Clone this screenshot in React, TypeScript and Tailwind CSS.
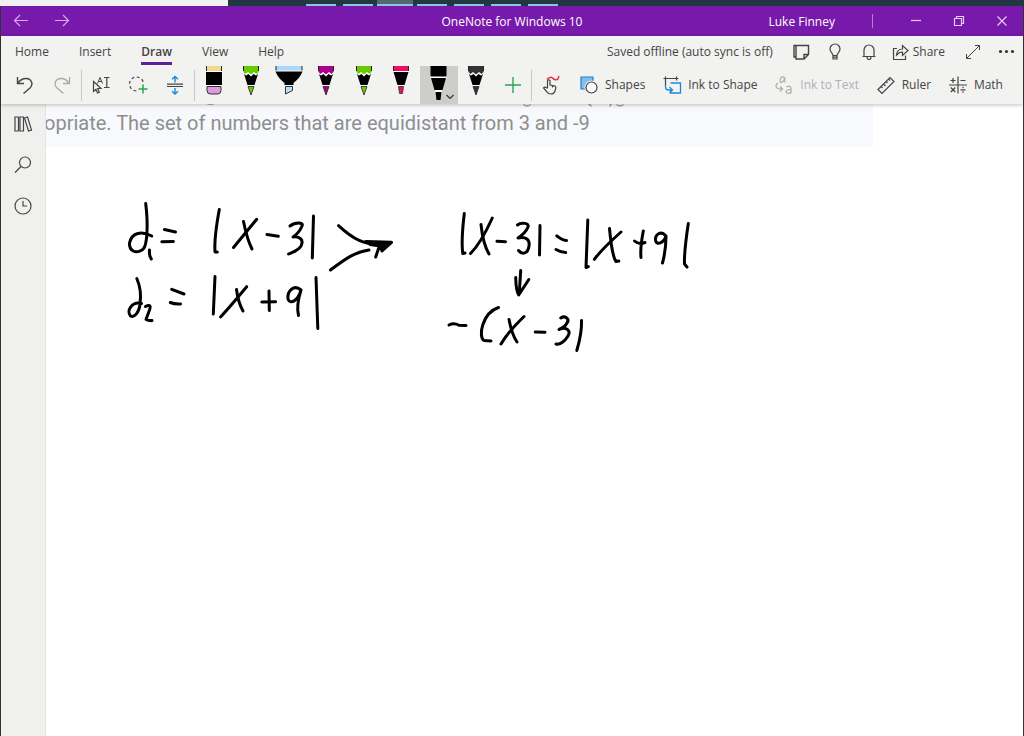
import type { ReactNode } from 'react'

interface IconProps {
    children: ReactNode;
    size?: number;
    stroke?: string;
}

function Icon({ children, size = 20, stroke = '#444444' }: IconProps) {
    return (
        <svg width={size} height={size} viewBox="0 0 20 20" fill="none" stroke={stroke} strokeWidth="1.2" className="shrink-0" aria-hidden="true">
            {children}
        </svg>
    )
}

interface ToolProps {
    label: string;
    children: ReactNode;
}

function Tool({ label, children }: ToolProps) {
    return (
        <button type="button" aria-label={label} className="flex h-[38px] items-center justify-center">
            {children}
        </button>
    )
}

function LabelTool({ label, children, disabled }: ToolProps & { disabled?: boolean }) {
    return (
        <button type="button" disabled={disabled} className="flex h-[38px] items-center gap-[6px] whitespace-nowrap disabled:text-[#b1b1b1]">
            {children}
            <span>{label}</span>
        </button>
    )
}

function Separator() {
    return <div className="h-[31px] w-px shrink-0 bg-[#c8c8c8]"></div>
}

function Pencil({ color }: { color: string }) {
    return (
        <svg width="30" height="38" viewBox="0 0 30 38" aria-hidden="true">
            <path d="M7.5 5h15l-4.500 16h-6z" fill="#fff" />
            <path d="M7.5 0h15v6l-2 2-2.5-2-3 2.5-3-2.5-2.5 2-2-2z" fill={color} />
            <path d="M7.5 0v5M22.500 0v5" stroke="#222" />
            <path d="M8 8l2 1.500 2.500-1.500 2.500 2.500 2.500-2.500 2.500 1.500 2-1.500-3.500 11h-7z" fill="#000" />
            <path d="M12 20.500h6l-3 8.500z" fill={color} stroke="#222" strokeWidth=".8" />
        </svg>
    )
}

function Eraser() {
    return (
        <svg width="30" height="38" viewBox="0 0 30 38" aria-hidden="true">
            <path d="M7 0h16v21H7z" fill="#fff" />
            <path d="M7 0h16v5H7z" fill="#f5d98b" />
            <path d="M7.500 0v5M22.500 0v5" stroke="#222" />
            <path d="M7 6h16v13H7z" fill="#000" />
            <path d="M8 20.500h14v4q0 3.500-3.500 3.500h-7Q8 28 8 24.500z" fill="#dc9bdc" stroke="#333" />
        </svg>
    )
}

function Highlighter() {
    return (
        <svg width="30" height="38" viewBox="0 0 30 38" aria-hidden="true">
            <path d="M2 4h26v2H2zM11 18h8v3h-8z" fill="#fff" />
            <path d="M2 0h26v4.500H2z" fill="#a9d8fa" />
            <path d="M2 0v4.500M28 0v4.500" stroke="#222" />
            <path d="M1.500 5.500h27Q26 12 19.500 17v2h-9v-2Q4 12 1.500 5.500z" fill="#000" />
            <path d="M11.500 20.500h7v4l-7 3.500z" fill="#b8defa" stroke="#333" />
        </svg>
    )
}

function Marker() {
    return (
        <svg width="30" height="38" viewBox="0 0 30 38" aria-hidden="true">
            <path d="M7.500 4h15v3h-15zM12 18h6v3h-6z" fill="#fff" />
            <path d="M7 0h16v5H7z" fill="#f20d62" />
            <path d="M7.500 0v5M22.500 0v5" stroke="#222" />
            <path d="M7.500 6h15l-4 13h-7z" fill="#000" />
            <path d="M12.500 20.500h5l-1 7h-3z" fill="#f20d62" stroke="#333" strokeWidth=".8" />
        </svg>
    )
}

function BlackPen() {
    return (
        <svg width="37" height="38" viewBox="0 0 37 38" aria-hidden="true">
            <path d="M10.500 9h16v4h-16zM15 23h7v4h-7z" fill="#fff" />
            <path d="M10.500 0h16v10.500h-16zM11 12h15l-3.500 12h-8zM15.500 26h6l-1 8h-4z" fill="#000" />
            <path d="M26.500 29l3.500 3.500 3.500-3.500" fill="none" stroke="#333" strokeWidth="1.200" />
        </svg>
    )
}

const ink = [
    // d1 = |x - 3|
    'M151.700 236C142 231 132 232 129.500 243C129 251 136 254 142 250C148 247 148 222 145.700 203.500',
    'M149.500 250Q149 256 151.300 259', 'M164.500 229.500L175.500 232', 'M161.800 241.700L173.300 241.500',
    'M219.300 209.500Q214 238 215 252L217.300 252', 'M243.500 221.500Q247 239 252 249', 'M256.700 219.300L233.500 247.500',
    'M267 234.500L278.300 236.300', 'M290 226C295 222 304 222 302 226C300 231 296 235 293 237C300 236 304 240 301 246C298 251 293 252 288.500 254', 'M313.500 216L312.300 258',
    // d2 = |x + 9|
    'M136.800 278.500C141 288 141 297 140 304C139 313 134 318 130.500 316C126 311 132 301 141.500 303.500',
    'M145.500 306.500C150 304 151 306 149.500 310L146 319.500Q149 321 152 320.500', 'M171.700 289.300L184 294', 'M170.300 302.500Q175 304.500 180.500 304',
    'M215 276.500L213.300 314', 'M236.500 289.500Q238 302 243 311', 'M246.700 286.700Q228 309 220.500 317', 'M261.800 302L275.500 301.700', 'M269 291L269.300 310.500',
    'M301 290C294 284 287 291 288 299C290 305 298 301 301 290Q296 306 298.500 315.500', 'M316 277.500L317.800 328.500',
    // arrow joining both lines
    'M338.500 225.700C355 241 363 243 381 246L391.500 242.200L366 241.500', 'M330.500 270C344 260 354 252 369 250', 'M375.700 257L380 244L382 251L391 243L370 244.500L384 246.500',
    // |x - 3| = |x + 9|
    'M464.300 213.500Q461 241 462.800 253.500L465 253', 'M481 224.500Q483 244 489 254', 'M492.300 218Q481 243 470.500 253.500', 'M497 241.300L505.500 241.700',
    'M517.500 225C521 222 530 223 528 227C526 232 521 236 518 238C526 236 530 240 529 246C528 254 522 255 518.500 250.500', 'M540 225.500L539.500 255',
    'M556.800 235.800Q562 240 566.500 240.500', 'M556 249.500Q561 252.500 565.700 252.500', 'M587.800 220L586 267.500L588.300 266.500',
    'M609.500 228.500Q612 256 616 261.500L618.800 261', 'M621 232Q602 249 594.300 259.300', 'M634.500 241Q639 245 645 242.500', 'M643.300 231Q640 248 641 257.500',
    'M665 235C661 231 655 234 655.500 240C656 246 664 243 666 236Q666 250 662.500 263', 'M688.300 223.500Q684 252 684.500 264L687 267',
    // step below the left side
    'M520.700 270.500L519.300 293', 'M515.700 277.500Q516 291 518.700 295L528.800 279.500',
    'M449 325Q454 322.500 459 325.300L466 325.500', 'M498.500 307.500C482 313 478 337 484 340.500L491 341', 'M509 319.500Q512 335 517 342', 'M524 316.500Q508 332 501 344',
    'M535.300 332L545 332.300', 'M560.700 318C565 315 570 319 567 323Q565 327 559 329.500C567 326 571 331 568 336C565 341 560 345 556 344', 'M581.500 320.500Q582 333 576.800 350.500',
]

function TitleBar() {
    return (
        <header className="grid h-[30px] grid-cols-3 items-center bg-[#7719aa] text-white">
            <div className="flex items-center gap-[21px] pl-[10px]">
                <button type="button" aria-label="Back">
                    <Icon stroke="#d9a9ee"><path d="M17 9.500H3.500M9 4L3.500 9.500 9 15" /></Icon>
                </button>
                <button type="button" aria-label="Forward">
                    <Icon stroke="#d9a9ee"><path d="M3 9.500h13.500M11 4l5.500 5.500L11 15" /></Icon>
                </button>
            </div>
            <h1 className="pt-[2px] text-center">OneNote for Windows 10</h1>
            <div className="flex items-center justify-end">
                <button type="button" className="pt-[2px]">Luke Finney</button>
                <div className="ml-[37px] h-[14px] w-px bg-[#b67fd3]"></div>
                <div className="ml-[22px] grid w-[128px] grid-cols-3 justify-items-center">
                    <button type="button" aria-label="Minimize">
                        <Icon stroke="#eac8f8"><path d="M5 9.500h10" /></Icon>
                    </button>
                    <button type="button" aria-label="Restore">
                        <Icon stroke="#eac8f8"><path d="M5.500 7.500h7v7h-7zM7.500 7.500v-2h7v7h-2" /></Icon>
                    </button>
                    <button type="button" aria-label="Close">
                        <Icon stroke="#eac8f8"><path d="M5.500 5.500l9 9M14.500 5.500l-9 9" /></Icon>
                    </button>
                </div>
            </div>
        </header>
    )
}

function MenuBar() {
    return (
        <div className="flex h-[30px] items-center justify-between pl-[14px] pr-[7px] pt-[2px]">
            <nav className="flex gap-[30px]">
                <button type="button">Home</button>
                <button type="button">Insert</button>
                <button type="button" className="relative font-semibold">
                    Draw
                    <span className="absolute -bottom-[4px] left-0 h-[3px] w-full bg-[#5c1f9e]"></span>
                </button>
                <button type="button">View</button>
                <button type="button">Help</button>
            </nav>
            <div className="flex items-center">
                <span>Saved offline (auto sync is off)</span>
                <button type="button" aria-label="Feed" className="ml-[18px]">
                    <Icon><path d="M5 15H3V3.500h12M5 3.500h12.500v9L13 17H5zM13 17v-4.500h4.500" strokeWidth="1.400" /></Icon>
                </button>
                <button type="button" aria-label="Tell me" className="ml-[14px]">
                    <Icon><path d="M8 13.500c0-2.500-3-3-3-6.500a5 5 0 0110 0c0 3.500-3 4-3 6.500zM8 13.500v3.500h4v-3.500M8 15.200h4" /></Icon>
                </button>
                <button type="button" aria-label="Notifications" className="ml-[14px]">
                    <Icon><path d="M3.500 14.500h13M5 14.500V8a5 5 0 0110 0v6.500M8 15q0 2.500 2 2.500t2-2.500" /></Icon>
                </button>
                <button type="button" className="ml-[12px] flex items-center gap-[2px]">
                    <Icon><path d="M6 6.500H2.500v11h12v-4M5.500 13q.5-6 6-6V3.500L17 8.500l-5.500 5v-3.500q-3.500 0-6 3z" /></Icon>
                    Share
                </button>
                <button type="button" aria-label="Full screen" className="ml-[18px]">
                    <Icon><path d="M3.500 16.500l13-13M12 3.500h4.500V8M3.500 12v4.500H8" strokeWidth="1" /></Icon>
                </button>
                <button type="button" aria-label="More" className="ml-[13px]">
                    <svg width="20" height="20" viewBox="0 0 20 20" fill="#333" aria-hidden="true">
                        <circle cx="4.500" cy="9.500" r="1.600" /><circle cx="10.500" cy="9.500" r="1.600" /><circle cx="16.500" cy="9.500" r="1.600" />
                    </svg>
                </button>
            </div>
        </div>
    )
}

function DrawTools() {
    return (
        <div className="flex h-[38px] items-center pl-[5px]">
            <div className="grid w-[75px] shrink-0 grid-cols-2">
                <Tool label="Undo">
                    <Icon><path d="M2.500 2v6.500H9M2.500 8.500Q6 3.500 11 3.500t6 5Q17 11 15 13l-6.500 5.500" strokeWidth="1.400" /></Icon>
                </Tool>
                <Tool label="Redo">
                    <Icon stroke="#aaaaaa"><path d="M17.500 2v6.500H11M17.500 8.500Q14 3.500 9 3.500t-6 5Q3 11 5 13l6.500 5.500" strokeWidth="1.300" /></Icon>
                </Tool>
            </div>
            <Separator />
            <div className="grid w-[112px] shrink-0 grid-cols-3">
                <Tool label="Select objects or type text">
                    <Icon>
                        <path d="M2.500 6.500v10l2.500-2.300 1.500 3.800 1.800-.8-1.500-3.700H10z" />
                        <path d="M6.500 8.500L9 2.500l2.500 6M7.500 6.500h3" strokeWidth="1" />
                        <path d="M13 2.500h5.500M13 12.500h5.500M15.800 2.500v10" />
                    </Icon>
                </Tool>
                <Tool label="Lasso select">
                    <Icon>
                        <circle cx="8.500" cy="9" r="7" strokeDasharray="3 2.500" />
                        <circle cx="15" cy="14" r="5" fill="#f2f2f1" stroke="none" />
                        <path d="M15 9.500v9M10.500 14h9" stroke="#31a252" strokeWidth="1.500" />
                    </Icon>
                </Tool>
                <Tool label="Insert or remove space">
                    <Icon>
                        <path d="M2 9.200h16M2 11.500h16" />
                        <path d="M10 7.500V1.500M7 4.200l3-2.700 3 2.700M10 13v6M7 16.300l3 2.700 3-2.700" stroke="#1e8bcd" strokeWidth="1.400" />
                    </Icon>
                </Tool>
            </div>
            <Separator />
            <div className="grid w-[300px] shrink-0 grid-cols-8">
                <Tool label="Eraser"><Eraser /></Tool>
                <Tool label="Green pencil"><Pencil color="#66cc00" /></Tool>
                <Tool label="Highlighter"><Highlighter /></Tool>
                <Tool label="Purple pencil"><Pencil color="#ab008b" /></Tool>
                <Tool label="Light green pencil"><Pencil color="#66cc00" /></Tool>
                <Tool label="Red pen"><Marker /></Tool>
                <button type="button" aria-label="Black pen" aria-pressed="true" className="h-[38px] bg-[#cdcdca]"><BlackPen /></button>
                <Tool label="Black pencil"><Pencil color="#333333" /></Tool>
            </div>
            <div className="grid w-[36px] shrink-0">
                <Tool label="Add pen">
                    <Icon stroke="#31a252"><path d="M10 2v16M2 10h16" strokeWidth="1.400" /></Icon>
                </Tool>
            </div>
            <Separator />
            <div className="grid w-[37px] shrink-0">
                <Tool label="Draw with touch">
                    <Icon>
                        <path d="M6.500 13V5.500q1.300-1.500 2.500 0V10l5 1q1 .5.800 2l-.8 3q-1 3-4 3-2.500 0-4-2L2.500 13q1-2 4 .5M11.500 10.500v2" />
                        <path d="M6 4.500q3-3.500 5.500-1.500 2 2.500 4.500 1.500 2-1 1.500-3.500" stroke="#e0303e" strokeWidth="1.500" />
                    </Icon>
                </Tool>
            </div>
            <div className="flex flex-1 justify-between pl-[10px] pr-[20px]">
                <LabelTool label="Shapes">
                    <Icon><path d="M2 2h12v12H2z" fill="#84c0ec" stroke="#1e7fc8" /><circle cx="12.500" cy="12.500" r="7" fill="#f2f2f1" stroke="none" /><circle cx="12.500" cy="12.500" r="5.500" fill="#fafafa" /></Icon>
                </LabelTool>
                <LabelTool label="Ink to Shape">
                    <Icon>
                        <path d="M2 3.500h14M3.500 1.500v9M14.500 1.500v4M1.500 3.500h4M12.500 3.500h4" />
                        <path d="M8.500 8h10v10h-10v-3M3.500 10v2q0 3 3 3h3.500M7.500 12l3 3-3 3" stroke="#1e8bcd" strokeWidth="1.300" />
                    </Icon>
                </LabelTool>
                <LabelTool label="Ink to Text" disabled>
                    <Icon stroke="#aaaaaa">
                        <path d="M10.500 2.500q-4-2-4.500 3 0 3.500 3.500.5L11 2.500q-1 4 .5 5" />
                        <path d="M4 8q-3 2-1.500 4.500 1 1.500 5 1.500M6 11.500L8.500 14 6 16.500" />
                        <path d="M12.500 12q4-2 4.500 1v5.500M17 14.500q-5 0-5 2.500 1.500 3 5 0" />
                    </Icon>
                </LabelTool>
                <LabelTool label="Ruler">
                    <Icon><path d="M2 14.500L14 2.500l4 4L6 18.500zM5 11.500l1.500 1.500M7.500 9l2 2M10 6.500L11.500 8M12.500 4l1.500 1.500" /></Icon>
                </LabelTool>
                <LabelTool label="Math">
                    <Icon><path d="M10 1.500v17M1 10h18M2.500 5.500h5M5 3v5M12.500 5.500h5M2.800 12.500l4.500 4.500M7.300 12.500L2.800 17M12.500 14.800h5M15 11.800v1.500M15 16.300v1.500" /></Icon>
                </LabelTool>
            </div>
        </div>
    )
}

function SideRail() {
    return (
        <aside className="flex w-[45px] shrink-0 flex-col items-center gap-[21px] border-r border-[#e4e4e3] bg-[#f0f0ee] pt-[10px]">
            <button type="button" aria-label="Notebooks">
                <Icon><path d="M2 3h3.500v14H2zM7 3h3.500v14H7zM11.500 4l3-1 4 13-3 1z" /></Icon>
            </button>
            <button type="button" aria-label="Search">
                <Icon><circle cx="12" cy="7.500" r="5.500" /><path d="M8 11.500l-6 6" /></Icon>
            </button>
            <button type="button" aria-label="Recent notes">
                <Icon><circle cx="10" cy="10" r="8" /><path d="M10 5v5h4" /></Icon>
            </button>
        </aside>
    )
}

function Page() {
    return (
        <main className="relative flex-1 overflow-hidden bg-white">
            <div className="h-[43px] w-[827px] max-w-full bg-[#f8f9fd]">
                <p className="-ml-[2px] whitespace-nowrap pt-[6px] font-[Roboto,sans-serif] text-[20px] leading-[26px] text-[#8e8e8e]">
                    opriate. The set of numbers that are equidistant from 3 and -9
                </p>
            </div>
            <svg width="660" height="300" viewBox="46 104 660 300" fill="none" stroke="#000" strokeWidth="3" strokeLinecap="round" strokeLinejoin="round" className="absolute left-0 top-0" aria-hidden="true">
                <path d="M524 105q3 2 6 0M589 104l2 2M610 106l1-2M617 105q3 2 6 0M208 104h5" stroke="#9a9a9a" strokeWidth="1.500" />
                {ink.map((d, i) => (
                    <path key={i} d={d} />
                ))}
            </svg>
        </main>
    )
}

export default function App() {
    return (
        <div className="flex min-h-screen flex-col font-['Open_Sans','Noto_Sans',sans-serif] text-[12px] leading-[18px] text-[#444444]">
            <div className="flex h-[6px] items-end bg-[#213843]">
                <div className="h-full w-[228px] bg-[#f1f1f1]"></div>
                <div className="grid h-full grid-cols-[repeat(7,37px)] items-end justify-items-center pl-[74px]">
                    <div className="h-[2px] w-[30px] bg-[#8fc3e6]"></div>
                    <div className="h-[2px] w-[30px] bg-[#8fc3e6]"></div>
                    <div className="h-[6px] w-[36px] border-b-2 border-[#8fc3e6] bg-[#536971]"></div>
                    <div className="h-[2px] w-[30px] bg-[#8fc3e6]"></div>
                    <div className="h-[2px] w-[30px] bg-[#8fc3e6]"></div>
                    <div className="h-[2px] w-[30px] bg-[#8fc3e6]"></div>
                    <div className="h-[2px] w-[30px] bg-[#8fc3e6]"></div>
                </div>
            </div>
            <div className="flex flex-1 flex-col border-x border-[#333333]">
                <TitleBar />
                <div className="relative z-10 bg-[#f2f2f1] shadow-[0_1px_4px_rgba(0,0,0,0.25)]">
                    <MenuBar />
                    <DrawTools />
                </div>
                <div className="flex flex-1">
                    <SideRail />
                    <Page />
                </div>
            </div>
        </div>
    )
}
